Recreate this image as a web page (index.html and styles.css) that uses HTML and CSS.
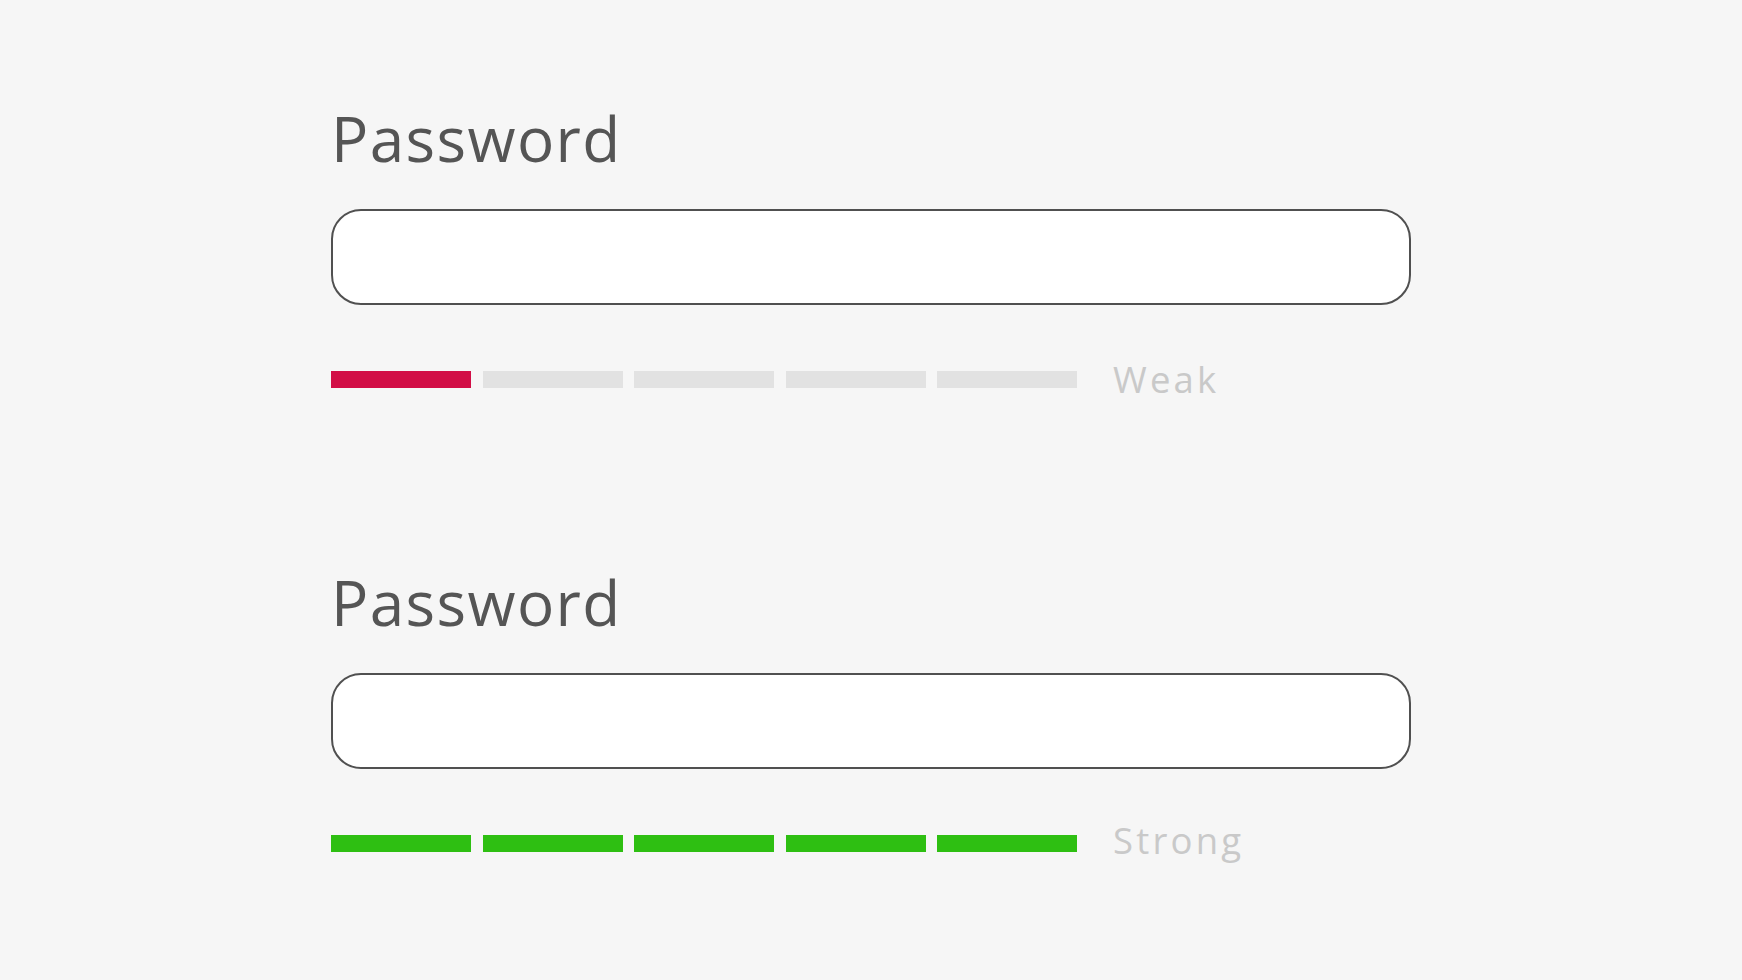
FILE: index.html
```html
<!DOCTYPE html>
<html lang="en">
<head>
<meta charset="utf-8">
<title>Password strength</title>
<link rel="stylesheet" href="styles.css">
</head>
<body>
<main class="page">
  <section class="field">
    <label class="field-label" for="pw1">Password</label>
    <input class="field-input" id="pw1" type="password">
    <div class="strength">
      <div class="bars">
        <span class="bar bar--weak"></span>
        <span class="bar"></span>
        <span class="bar"></span>
        <span class="bar"></span>
        <span class="bar"></span>
      </div>
      <span class="strength-label">Weak</span>
    </div>
  </section>
  <section class="field field--second">
    <label class="field-label" for="pw2">Password</label>
    <input class="field-input" id="pw2" type="password">
    <div class="strength">
      <div class="bars">
        <span class="bar bar--strong"></span>
        <span class="bar bar--strong"></span>
        <span class="bar bar--strong"></span>
        <span class="bar bar--strong"></span>
        <span class="bar bar--strong"></span>
      </div>
      <span class="strength-label strength-label--up">Strong</span>
    </div>
  </section>
</main>
</body>
</html>
```
FILE: styles.css
```css
html, body {
  margin: 0;
  padding: 0;
  background: #f6f6f6;
}
body {
  font-family: "Open Sans", "Liberation Sans", sans-serif;
  width: 1742px;
  height: 980px;
  overflow: hidden;
}
.page {
  padding: 107px 0 0 331px;
  display: flex;
  flex-direction: column;
}
.field {
  display: flex;
  flex-direction: column;
  align-items: flex-start;
}
.field--second {
  margin-top: 183px;
}
.field-label {
  font-size: 62px;
  line-height: 62px;
  color: #555555;
  font-weight: 400;
  letter-spacing: 1.4px;
}
.field-input {
  margin-top: 40px;
  box-sizing: border-box;
  width: 1080px;
  height: 96px;
  border: 2px solid #505050;
  border-radius: 30px;
  background: #ffffff;
  outline: none;
  padding: 0 30px;
}
.strength {
  margin-top: 66px;
  display: flex;
  align-items: center;
  height: 17px;
  gap: 36px;
}
.bars {
  display: flex;
  gap: 11.5px;
}
.bar {
  display: block;
  width: 140px;
  height: 17px;
  background: #e2e2e2;
}
.bar--weak {
  background: #d20e46;
}
.bar--strong {
  background: #2ebf12;
}
.strength-label {
  font-size: 36.5px;
  line-height: 17px;
  color: #c9c9c9;
  white-space: nowrap;
  letter-spacing: 3.2px;
}
.strength-label--up {
  padding-bottom: 6px;
}
```
